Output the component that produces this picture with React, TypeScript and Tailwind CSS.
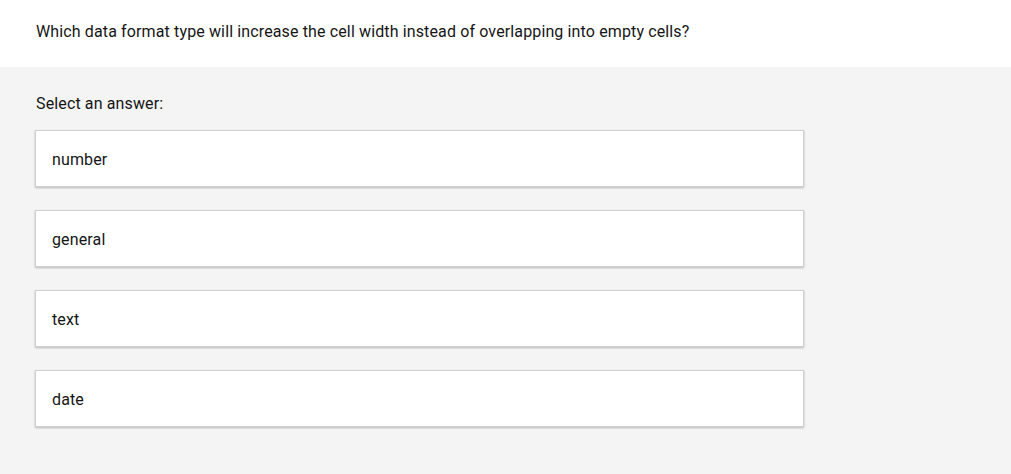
const answers = ['number', 'general', 'text', 'date'];

export default function App() {
  return (
    <div className="min-h-[474px] w-full bg-[#f4f4f4] font-['Roboto',sans-serif] tracking-[0.13px] text-[#161616]">
      <div className="h-[67px] bg-white px-9 pt-[21px]">
        <p className="m-0 text-[16px] leading-[22px]">
          Which data format type will increase the cell width instead of overlapping into empty cells?
        </p>
      </div>
      <div className="px-[35px] pt-[26px] pb-[46px]">
        <p className="m-0 mb-[15px] pl-px text-[16px] leading-[22px]">Select an answer:</p>
        <div className="flex w-[769px] flex-col gap-[23px]">
          {answers.map((a) => (
            <button
              key={a}
              type="button"
              className="flex h-[57px] items-center border border-[#d0d0d0] bg-white px-4 pt-[2px] text-left text-[16px] shadow-[0_1px_2px_rgba(0,0,0,0.25)]"
            >
              {a}
            </button>
          ))}
        </div>
      </div>
    </div>
  );
}
